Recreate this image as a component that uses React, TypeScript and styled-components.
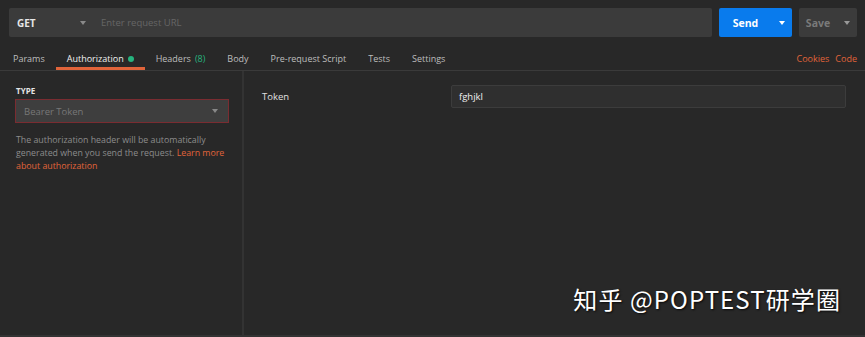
import styled, { createGlobalStyle } from "styled-components";

const GlobalStyle = createGlobalStyle`
  html, body {
    margin: 0;
    padding: 0;
    background: #282828;
  }
  body {
    font-family: "Open Sans", "Liberation Sans", sans-serif;
  }
`;

const Page = styled.div`
  width: 865px;
  height: 337px;
  display: flex;
  flex-direction: column;
  background: #282828;
  box-sizing: border-box;
  border-bottom: 2px solid #333;
  overflow: hidden;
`;

const TopBar = styled.div`
  display: flex;
  align-items: stretch;
  gap: 7px;
  padding: 8px 8px 0 9px;
  height: 29px;
`;

const UrlBox = styled.div`
  flex: 1;
  display: flex;
  align-items: center;
  background: #3b3b3b;
  border-radius: 2px;
`;

const Method = styled.div`
  width: 86px;
  box-sizing: border-box;
  display: flex;
  align-items: center;
  justify-content: space-between;
  padding: 0 9px 0 8px;
  font-size: 10px;
  font-weight: 700;
  color: #e6e6e6;
`;

const UrlPlaceholder = styled.div`
  padding-left: 6px;
  font-size: 9.5px;
  color: #666;
`;

const Caret = styled.span<{ color?: string }>`
  width: 0;
  height: 0;
  border-left: 3px solid transparent;
  border-right: 3px solid transparent;
  border-top: 4px solid ${(p) => p.color || "#8a8a8a"};
`;

const SplitButton = styled.div<{ bg: string; fg: string; w: number }>`
  width: ${(p) => p.w}px;
  display: flex;
  align-items: center;
  background: ${(p) => p.bg};
  color: ${(p) => p.fg};
  border-radius: 2px;
  font-size: 10.5px;
  font-weight: 700;
`;

const ButtonLabel = styled.div`
  flex: 1;
  text-align: center;
`;

const ButtonArrow = styled.div`
  width: 20px;
  display: flex;
  justify-content: center;
`;

const TabRow = styled.div`
  display: flex;
  align-items: flex-end;
  height: 32px;
  padding: 0 8px 0 2px;
  border-bottom: 1px solid #3a3a3a;
  margin-top: 1px;
`;

const Tab = styled.div<{ active?: boolean }>`
  display: flex;
  align-items: center;
  gap: 4px;
  padding: 0 11px 2px;
  line-height: 12px;
  font-size: 9px;
  color: ${(p) => (p.active ? "#f0f0f0" : "#bdbdbd")};
  border-bottom: 3px solid ${(p) => (p.active ? "#e0643a" : "transparent")};
`;

const Dot = styled.span`
  width: 6px;
  height: 6px;
  border-radius: 50%;
  background: #26b47f;
`;

const Count = styled.span`
  color: #26b47f;
`;

const Spacer = styled.div`
  flex: 1;
`;

const Link = styled.span`
  color: #e0643a;
`;

const RightLinks = styled.div`
  display: flex;
  gap: 6px;
  line-height: 12px;
  padding-bottom: 5px;
  font-size: 9px;
`;

const Body = styled.div`
  flex: 1;
  display: flex;
  position: relative;
`;

const LeftPanel = styled.div`
  width: 244px;
  box-sizing: border-box;
  border-right: 2px solid #333;
  padding: 14px 10px 0 16px;
`;

const FieldLabel = styled.div`
  font-size: 8px;
  font-weight: 700;
  color: #e6e6e6;
  margin-bottom: 3px;
`;

const Select = styled.div`
  width: 214px;
  height: 24px;
  box-sizing: border-box;
  margin-left: -1px;
  display: flex;
  align-items: center;
  justify-content: space-between;
  padding: 0 10px 0 8px;
  background: #3e3e3e;
  border: 1px solid #7a2c31;
  font-size: 9.5px;
  color: #777;
`;

const Help = styled.p`
  margin: 11px 0 0;
  font-size: 8.8px;
  line-height: 13px;
  color: #8c8c8c;
`;

const RightPanel = styled.div`
  flex: 1;
  display: grid;
  grid-template-columns: 189px 395px;
  align-content: start;
  align-items: center;
  padding: 14px 0 0 18px;
`;

const RowLabel = styled.div`
  font-size: 9.5px;
  color: #e0e0e0;
`;

const TextInput = styled.div`
  height: 23px;
  box-sizing: border-box;
  display: flex;
  align-items: center;
  padding-left: 7px;
  background: #2f2f2f;
  border: 1px solid #3c3c3c;
  border-radius: 2px;
  font-size: 9.5px;
  color: #f0f0f0;
`;

const Watermark = styled.div`
  position: absolute;
  right: 24px;
  bottom: 19px;
  font-family: "Noto Sans CJK SC", "Noto Sans", sans-serif;
  font-size: 24px;
  color: #ffffff;
  text-shadow: 1px 1px 2px rgba(0, 0, 0, 0.8);
  letter-spacing: 1.1px;
  white-space: nowrap;
`;

const tabs = [
  "Params",
  "Authorization",
  "Headers",
  "Body",
  "Pre-request Script",
  "Tests",
  "Settings",
];

export default function App() {
  return (
    <>
      <GlobalStyle />
      <Page>
        <TopBar>
          <UrlBox>
            <Method>
              GET <Caret />
            </Method>
            <UrlPlaceholder>Enter request URL</UrlPlaceholder>
          </UrlBox>
          <SplitButton bg="#097bed" fg="#ffffff" w={73}>
            <ButtonLabel>Send</ButtonLabel>
            <ButtonArrow>
              <Caret color="#ffffff" />
            </ButtonArrow>
          </SplitButton>
          <SplitButton bg="#3b3b3b" fg="#7a7a7a" w={58}>
            <ButtonLabel>Save</ButtonLabel>
            <ButtonArrow>
              <Caret color="#999" />
            </ButtonArrow>
          </SplitButton>
        </TopBar>

        <TabRow>
          {tabs.map((t) => (
            <Tab key={t} active={t === "Authorization"}>
              {t}
              {t === "Authorization" && <Dot />}
              {t === "Headers" && <Count>(8)</Count>}
            </Tab>
          ))}
          <Spacer />
          <RightLinks>
            <Link>Cookies</Link>
            <Link>Code</Link>
          </RightLinks>
        </TabRow>

        <Body>
          <LeftPanel>
            <FieldLabel>TYPE</FieldLabel>
            <Select>
              Bearer Token <Caret color="#888" />
            </Select>
            <Help>
              The authorization header will be automatically generated when you
              send the request. <Link>Learn more about authorization</Link>
            </Help>
          </LeftPanel>
          <RightPanel>
            <RowLabel>Token</RowLabel>
            <TextInput>fghjkl</TextInput>
          </RightPanel>
          <Watermark>知乎 @POPTEST研学圈</Watermark>
        </Body>
      </Page>
    </>
  );
}
